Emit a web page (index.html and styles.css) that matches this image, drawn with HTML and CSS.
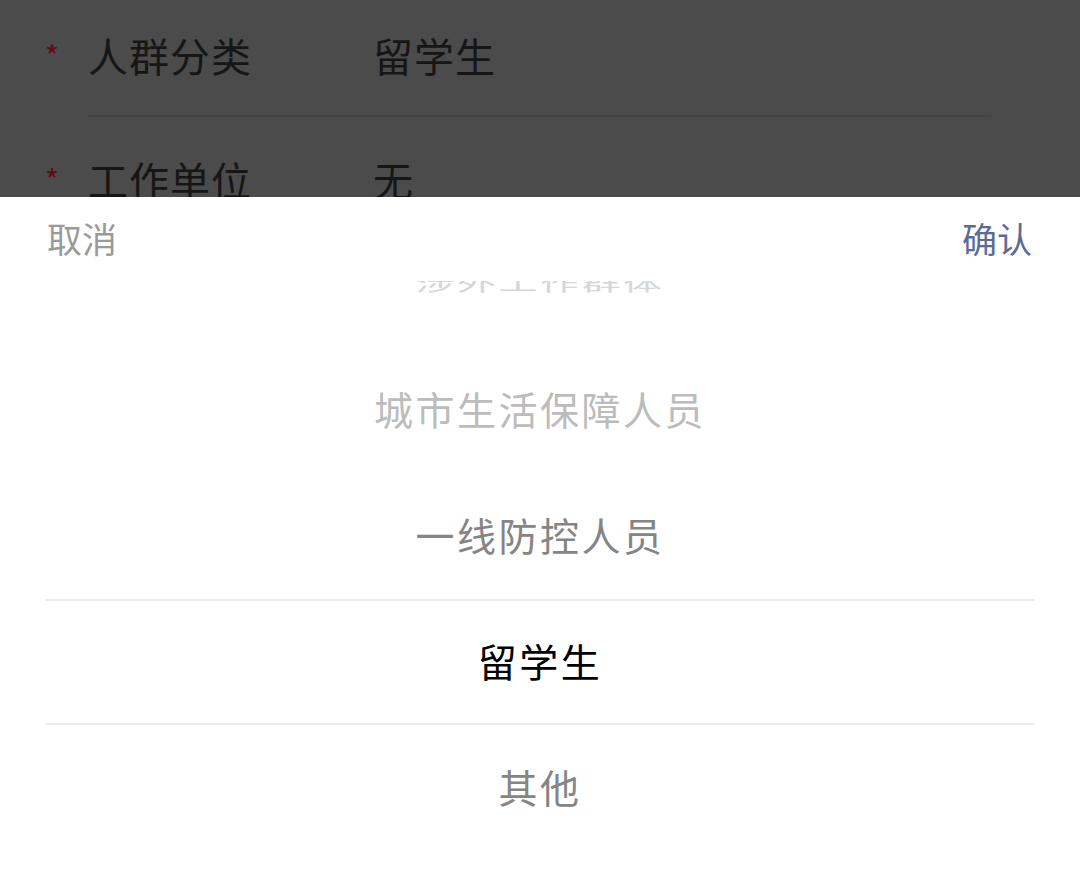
FILE: index.html
```html
<!DOCTYPE html>
<html>
    <head>
        <meta charset="utf-8" />
        <title>人群分类</title>
        <link rel="stylesheet" href="styles.css">
    </head>
    <body>
        <div class="backdrop">
            <div class="field">
                <span class="req">*</span>
                <span class="label">人群分类</span>
                <span class="value">留学生</span>
            </div>
            <div class="field">
                <span class="req">*</span>
                <span class="label">工作单位</span>
                <span class="value">无</span>
            </div>
        </div>
        <div class="sheet">
            <div class="toolbar">
                <span class="cancel">取消</span>
                <span class="confirm">确认</span>
            </div>
            <div class="wheel">
                <ul class="options">
                    <li class="far">涉外工作群体</li>
                    <li class="near2">城市生活保障人员</li>
                    <li class="near1">一线防控人员</li>
                    <li class="active">留学生</li>
                    <li class="near1">其他</li>
                </ul>
            </div>
        </div>
    </body>
</html>
```

FILE: styles.css
```css
html, body {
    margin: 0;
    padding: 0;
}

body {
    width: 1080px;
    height: 872px;
    overflow: hidden;
    font-family: "Noto Sans CJK SC", "Noto Sans", sans-serif;
    background: #fff;
}

/* dimmed form behind the popup */
.backdrop {
    height: 197px;
    overflow: hidden;
    background: #4b4b4b;
}

.field {
    display: flex;
    align-items: center;
    height: 120px;
    margin-left: 88px;
    margin-right: 89px;
    position: relative;
    font-size: 40px;
    letter-spacing: 1px;
    color: #161616;
}

.field:first-child {
    margin-top: -5px;
    border-bottom: 2px solid #444;
}

.field + .field {
    height: 124px;
}

.req {
    position: absolute;
    left: -43px;
    font-size: 30px;
    color: #5e0d14;
}

.label {
    width: 285px;
}

/* picker popup */
.sheet {
    height: 675px;
    display: flex;
    flex-direction: column;
}

.toolbar {
    display: flex;
    justify-content: space-between;
    align-items: center;
    height: 84px;
    padding: 0 48px 4px 47px;
    box-sizing: border-box;
    font-size: 35px;
}

.cancel {
    color: #9a9a9a;
}

.confirm {
    color: #5a6b97;
}

.wheel {
    flex: 1;
    overflow: hidden;
    padding: 0 46px 0 46px;
}

.options {
    list-style: none;
    margin: -60px 0 0 0;
    padding: 0;
}

.options li {
    height: 126px;
    display: flex;
    align-items: center;
    justify-content: center;
    padding-bottom: 5px;
    font-size: 39px;
    letter-spacing: 2.5px;
    box-sizing: border-box;
}

.far {
    color: #d6d6d6;
    transform: translateY(-1px) scaleY(0.5);
}

.near2 {
    color: #bcbcbc;
}

.near1 {
    color: #858585;
}

.active {
    color: #000;
    border-top: 2px solid #ececec;
    border-bottom: 2px solid #ececec;
}
```
